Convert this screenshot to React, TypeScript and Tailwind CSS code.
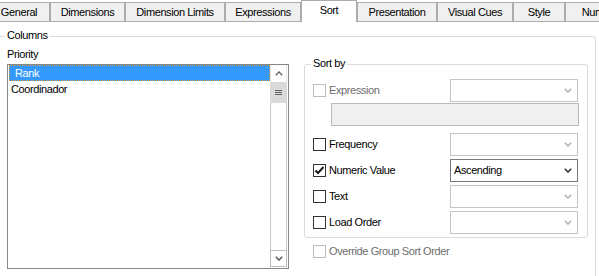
import React from 'react';

const tabs = [
  { label: 'General', cls: 'w-[62px] -ml-[12px]' },
  { label: 'Dimensions', cls: 'w-[75px]' },
  { label: 'Dimension Limits', cls: 'w-[100px]' },
  { label: 'Expressions', cls: 'w-[76px]' },
  { label: 'Sort', cls: 'w-[56px]', active: true },
  { label: 'Presentation', cls: 'w-[80px]' },
  { label: 'Visual Cues', cls: 'w-[76px]' },
  { label: 'Style', cls: 'w-[52px]' },
  { label: 'Number', cls: 'w-[70px]' },
];

const Chevron = ({ color }: { color: string }) => (
  <svg width="8" height="5" viewBox="0 0 8 5" className="shrink-0">
    <path d="M0.8 0.8 L4 4 L7.2 0.8" fill="none" stroke={color} strokeWidth="1.6" />
  </svg>
);

const CheckBox = ({ checked, disabled }: { checked?: boolean; disabled?: boolean }) => (
  <span
    className={
      disabled
        ? 'w-[13px] h-[13px] border border-[#bcbcbc] bg-white shrink-0'
        : 'w-[13px] h-[13px] border border-[#333333] bg-white shrink-0 flex items-center justify-center'
    }
  >
    {checked && (
      <svg width="11" height="11" viewBox="0 0 11 11">
        <path d="M1.5 5.5 L4 8 L9.5 2" fill="none" stroke="#1a1a1a" strokeWidth="2" />
      </svg>
    )}
  </span>
);

const Combo = ({ value, enabled }: { value?: string; enabled?: boolean }) => (
  <div
    className={
      enabled
        ? 'w-[128px] h-[23px] border border-[#7a7a7a] bg-white flex items-center pl-[3px] pr-[5px]'
        : 'w-[128px] h-[23px] border border-[#c4c4c4] bg-white flex items-center pl-[3px] pr-[5px]'
    }
  >
    <span className="flex-1">{value}</span>
    <Chevron color={enabled ? '#333333' : '#b4b4b4'} />
  </div>
);

const SortRow = ({
  label,
  checked,
  disabled,
  value,
  className,
}: {
  label: string;
  checked?: boolean;
  disabled?: boolean;
  value?: string;
  className: string;
}) => (
  <div className={`flex items-center h-[23px] pl-[8px] pr-[9px] ${className}`}>
    <CheckBox checked={checked} disabled={disabled} />
    <span className={disabled ? 'ml-[3px] flex-1 text-[#6d6d6d]' : 'ml-[3px] flex-1'}>{label}</span>
    <Combo value={value} enabled={checked} />
  </div>
);

export default function App() {
  return (
    <div className="w-[599px] h-[276px] overflow-hidden bg-white text-black text-[11px] leading-[13px] tracking-[-0.4px] font-['Liberation_Sans',Arial,sans-serif]">
      {/* tab strip */}
      <div className="flex items-end h-[22px]">
        {tabs.map((t) =>
          t.active ? (
            <div
              key={t.label}
              className={`${t.cls} shrink-0 h-[22px] border-t border-x border-[#acacac] bg-white flex items-center justify-center pb-[3px]`}
            >
              {t.label}
            </div>
          ) : (
            <div
              key={t.label}
              className={`${t.cls} shrink-0 h-[20px] border border-[#acacac] bg-[#f0f0f0] flex items-center justify-center whitespace-nowrap overflow-hidden`}
            >
              {t.label}
            </div>
          )
        )}
      </div>

      {/* Columns group */}
      <div className="mt-[14px] -ml-[2px] w-[598px] h-[260px] border border-[#dcdcdc] rounded-[3px]">
        <div className="-mt-[8px] ml-[6px] px-[2px] bg-white w-fit">Columns</div>

        <div className="flex items-start pl-[8px] mt-[6px]">
          {/* Priority list */}
          <div className="flex flex-col">
            <div>Priority</div>
            <div className="mt-[3px] w-[282px] h-[205px] border border-[#828790] bg-white flex pr-[1px]">
              <div className="flex-1 flex flex-col pl-[1px]">
                <div className="h-[16px] bg-[#3399ff] border border-dotted border-[#d9964a] text-white flex items-center pl-[5px]">
                  Rank
                </div>
                <div className="h-[16px] flex items-center pl-[2px]">Coordinador</div>
              </div>
              <div className="w-[17px] flex flex-col">
                <div className="h-[17px] flex items-center justify-center border-x border-[#e6e6e6]">
                  <svg width="8" height="5" viewBox="0 0 8 5">
                    <path d="M0.8 4.2 L4 1 L7.2 4.2" fill="none" stroke="#606060" strokeWidth="1.3" />
                  </svg>
                </div>
                <div className="h-[21px] bg-[#dadada] flex flex-col items-center justify-center gap-[1px]">
                  <span className="w-[7px] h-[1px] bg-[#606060]" />
                  <span className="w-[7px] h-[1px] bg-[#606060]" />
                  <span className="w-[7px] h-[1px] bg-[#606060]" />
                </div>
                <div className="flex-1 border-x border-[#c8c8c8]" />
                <div className="h-[17px] border border-[#bcbcbc] flex items-center justify-center">
                  <Chevron color="#606060" />
                </div>
                <div className="h-[1px]" />
              </div>
            </div>
          </div>

          {/* Sort by */}
          <div className="ml-[15px] mt-[16px] flex flex-col">
            <div className="w-[284px] border border-[#dcdcdc] rounded-[3px] pb-[3px]">
              <div className="-mt-[8px] ml-[6px] px-[2px] bg-white w-fit">Sort by</div>
              <SortRow label="Expression" disabled className="mt-[9px]" />
              <div className="mt-[1px] ml-[26px] w-[248px] h-[23px] border border-[#b9b9b9] bg-[#f0f0f0]" />
              <SortRow label="Frequency" className="mt-[7px]" />
              <SortRow label="Numeric Value" checked value="Ascending" className="mt-[3px]" />
              <SortRow label="Text" className="mt-[3px]" />
              <SortRow label="Load Order" className="mt-[3px]" />
            </div>
            <div className="mt-[7px] h-[13px] pl-[9px] flex items-center">
              <CheckBox disabled />
              <span className="ml-[3px] text-[#6d6d6d]">Override Group Sort Order</span>
            </div>
          </div>
        </div>
      </div>
    </div>
  );
}
